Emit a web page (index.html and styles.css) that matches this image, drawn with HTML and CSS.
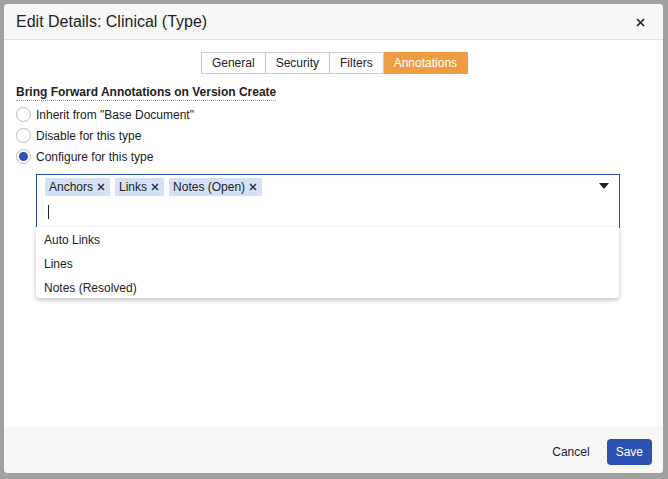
FILE: index.html
```html
<!DOCTYPE html>
<html>
<head>
<meta charset="utf-8">
<link rel="stylesheet" href="styles.css">
</head>
<body>
<div class="modal">
  <div class="header">
    <div class="title">Edit Details: Clinical (Type)</div>
    <svg class="close" width="9" height="9" viewBox="0 0 9 9"><path d="M1 1 L8 8 M8 1 L1 8" stroke="#222" stroke-width="1.7" fill="none"/></svg>
  </div>
  <div class="content">
    <div class="tabs">
      <div class="tab">General</div>
      <div class="tab">Security</div>
      <div class="tab">Filters</div>
      <div class="tab active">Annotations</div>
    </div>
    <div class="section-title"><span>Bring Forward Annotations on Version Create</span></div>
    <div class="radios">
      <label class="radio"><span class="dot"></span>Inherit from "Base Document"</label>
      <label class="radio"><span class="dot"></span>Disable for this type</label>
      <label class="radio"><span class="dot checked"></span>Configure for this type</label>
    </div>
    <div class="select-wrap">
      <div class="select">
        <div class="tags">
          <span class="tag">Anchors<svg class="x" width="8" height="8" viewBox="0 0 8 8"><path d="M1 1 L7 7 M7 1 L1 7" stroke="#333" stroke-width="1.5" fill="none"/></svg></span>
          <span class="tag">Links<svg class="x" width="8" height="8" viewBox="0 0 8 8"><path d="M1 1 L7 7 M7 1 L1 7" stroke="#333" stroke-width="1.5" fill="none"/></svg></span>
          <span class="tag">Notes (Open)<svg class="x" width="8" height="8" viewBox="0 0 8 8"><path d="M1 1 L7 7 M7 1 L1 7" stroke="#333" stroke-width="1.5" fill="none"/></svg></span>
        </div>
        <div class="input-row"><span class="caret"></span></div>
        <svg class="arrow" width="10" height="6" viewBox="0 0 10 6"><path d="M0 0 H10 L5 6 Z" fill="#222"/></svg>
      </div>
      <div class="menu">
        <div class="item">Auto Links</div>
        <div class="item">Lines</div>
        <div class="item">Notes (Resolved)</div>
      </div>
    </div>
  </div>
  <div class="footer">
    <button class="btn cancel">Cancel</button>
    <button class="btn save">Save</button>
  </div>
</div>
</body>
</html>
```
FILE: styles.css
```css
html, body {
  margin: 0;
  padding: 0;
  height: 100%;
}
body {
  background: #a0a0a0;
  font-family: "Liberation Sans", Arial, sans-serif;
  color: #222;
  padding: 4px 5px 6px 4px;
  box-sizing: border-box;
}
.modal {
  background: #fff;
  border-radius: 4px;
  height: 100%;
  display: flex;
  flex-direction: column;
  overflow: hidden;
}
.header {
  background: #f7f7f7;
  border-bottom: 1px solid #e3e3e3;
  height: 35px;
  display: flex;
  align-items: center;
  justify-content: space-between;
  padding: 0 18px 0 12px;
}
.title {
  font-size: 16px;
  color: #222;
}
.close {
  display: block;
  margin-top: 2px;
}
.content {
  flex: 1;
  padding: 12px 12px 0 12px;
}
.tabs {
  display: flex;
  justify-content: center;
  margin-left: 2px;
}
.tab {
  font-size: 12px;
  height: 20px;
  line-height: 20px;
  border: 1px solid #ccc;
  border-left: none;
  padding: 0 10px;
  color: #222;
}
.tab:first-child {
  border-left: 1px solid #ccc;
}
.tab.active {
  background: #ec9c42;
  border-color: #ec9c42;
  color: #fff;
}
.section-title {
  margin-top: 11px;
  font-size: 12px;
  font-weight: bold;
  color: #222;
}
.section-title span {
  border-bottom: 1px dotted #999;
  padding-bottom: 1px;
}
.radios {
  margin-top: 8px;
  display: flex;
  flex-direction: column;
  gap: 6px;
}
.radio {
  display: flex;
  align-items: center;
  font-size: 12px;
  height: 15px;
  color: #222;
}
.dot {
  width: 13px;
  height: 13px;
  border: 1px solid #bbb;
  border-radius: 50%;
  margin-right: 5px;
  box-sizing: content-box;
  position: relative;
  background: #fff;
}
.dot.checked::after {
  content: "";
  position: absolute;
  left: 2px;
  top: 2px;
  width: 9px;
  height: 9px;
  border-radius: 50%;
  background: #2d4fb4;
}
.select-wrap {
  margin: 10px 31px 0 20px;
  position: relative;
}
.select {
  border: 1px solid #2f4fa8;
  height: 49px;
  position: relative;
  padding: 3px 8px 0 8px;
}
.tags {
  display: flex;
  gap: 5px;
}
.tag {
  background: #d5e1f6;
  font-size: 12px;
  height: 18px;
  line-height: 18px;
  padding: 0 5px 0 4px;
  color: #222;
  border-radius: 1px;
  display: flex;
  align-items: center;
}
.tag .x {
  margin-left: 4px;
}
.input-row {
  height: 24px;
  display: flex;
  align-items: center;
  padding-left: 3px;
}
.caret {
  width: 1px;
  height: 14px;
  background: #222;
  margin-top: 7px;
}
.arrow {
  position: absolute;
  right: 10px;
  top: 8px;
}
.menu {
  position: absolute;
  left: 0;
  right: 1px;
  top: 53px;
  background: #fff;
  border-radius: 0 0 4px 4px;
  box-shadow: 0 2px 5px rgba(0,0,0,0.25);
  padding: 3px 0 0 0;
  height: 71px;
  box-sizing: border-box;
}
.item {
  font-size: 12px;
  height: 24px;
  line-height: 20px;
  padding-left: 8px;
  color: #222;
}
.footer {
  background: #f7f7f7;
  height: 47px;
  box-sizing: border-box;
  padding: 5px 11px 0 11px;
  display: flex;
  justify-content: flex-end;
  align-items: center;
  gap: 17px;
}
.btn {
  font-family: "Liberation Sans", Arial, sans-serif;
  font-size: 12px;
  border: none;
  background: none;
  padding: 0;
  cursor: pointer;
}
.cancel {
  color: #222;
}
.save {
  background: #2e50b2;
  color: #fff;
  height: 26px;
  padding: 0 9px;
  border-radius: 4px;
}
```
